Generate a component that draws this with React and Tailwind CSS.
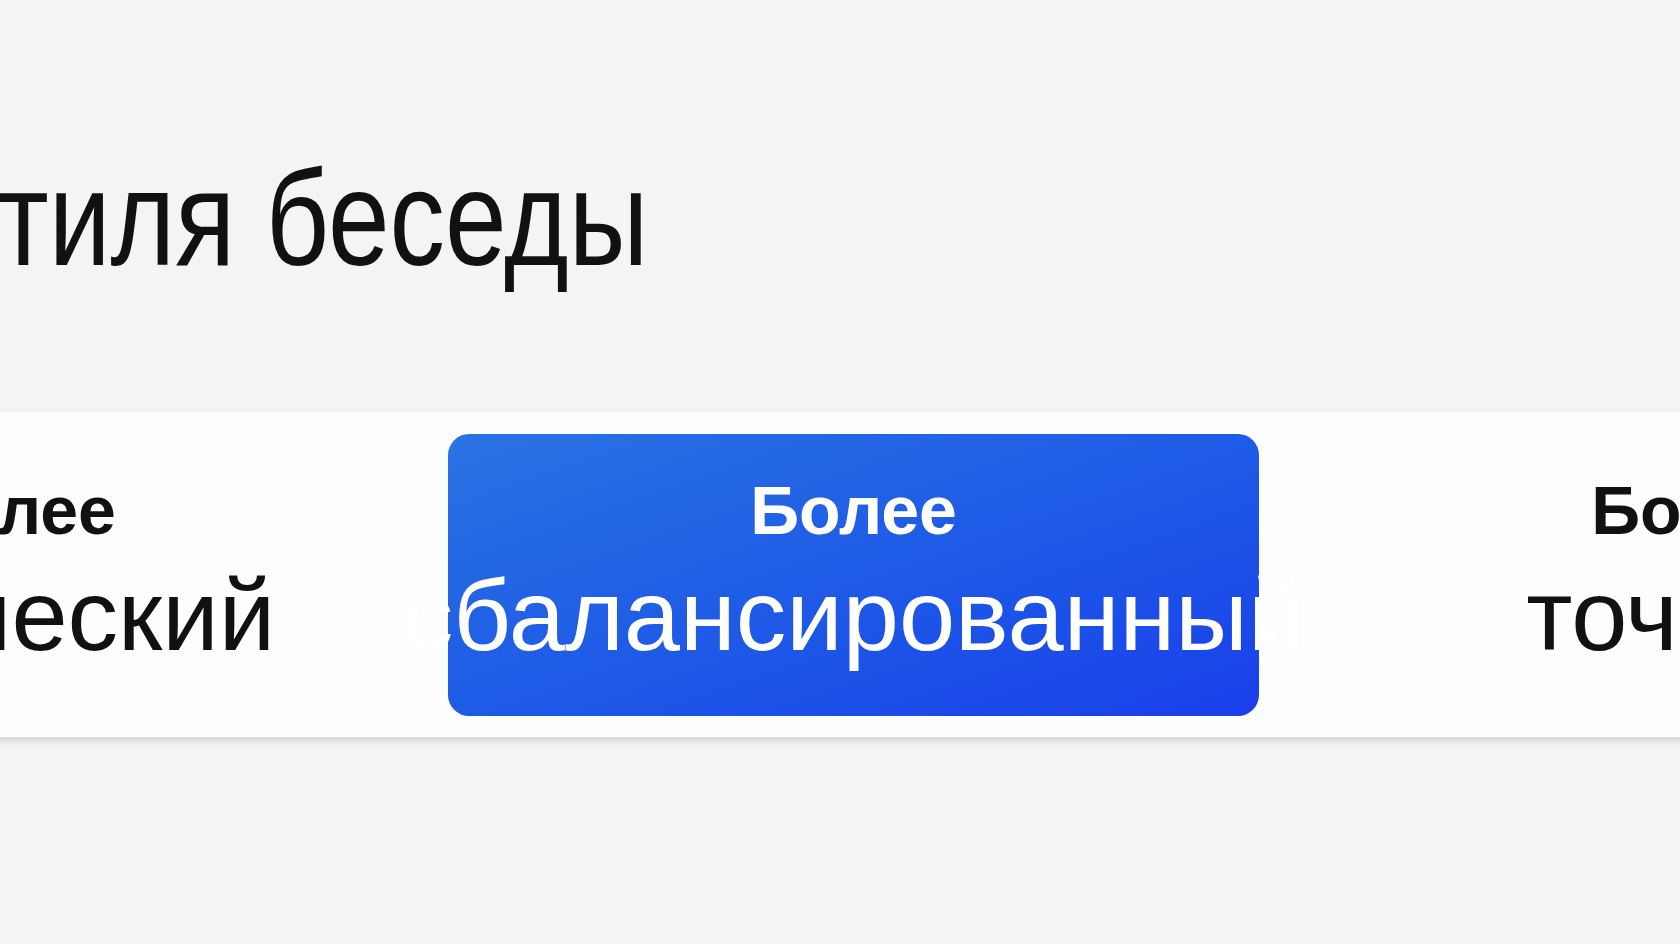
export default function App() {
  const items = [
    { top: "Более", bottom: "творческий", active: false },
    { top: "Более", bottom: "сбалансированный", active: true },
    { top: "Более", bottom: "точный", active: false },
  ];
  return (
    <div className="w-full h-[944px] bg-[#f4f4f4] overflow-hidden pt-[151px]" style={{ fontFamily: '"Liberation Sans", Arial, sans-serif' }}>
      <div className="ml-[-415px] w-[2537px] flex flex-col">
        <h1 className="ml-[-13px] h-[135px] text-[135px] leading-none font-normal text-[#111111] whitespace-nowrap origin-left scale-x-[0.82]">
          Выбор стиля беседы
        </h1>
        <div className="mt-[126px] h-[325px] bg-[#fdfdfd] shadow-[0_4px_6px_rgba(0,0,0,0.12)] flex gap-[30px] px-[22px] pt-[22px] pb-[21px]">
          {items.map((it, i) => (
            <div
              key={i}
              className={
                it.active
                  ? "w-[811px] h-full shrink-0 rounded-[21px] bg-linear-to-br from-[#2b72e2] to-[#1b3eea] text-white flex flex-col items-center pt-[42px] gap-[21px] whitespace-nowrap"
                  : "w-[811px] h-full shrink-0 rounded-[21px] text-[#111111] flex flex-col items-center pt-[42px] gap-[21px] whitespace-nowrap"
              }
            >
              <span className="text-[68px] leading-none font-bold">{it.top}</span>
              <span className="text-[101px] leading-none font-normal">{it.bottom}</span>
            </div>
          ))}
        </div>
      </div>
    </div>
  );
}
